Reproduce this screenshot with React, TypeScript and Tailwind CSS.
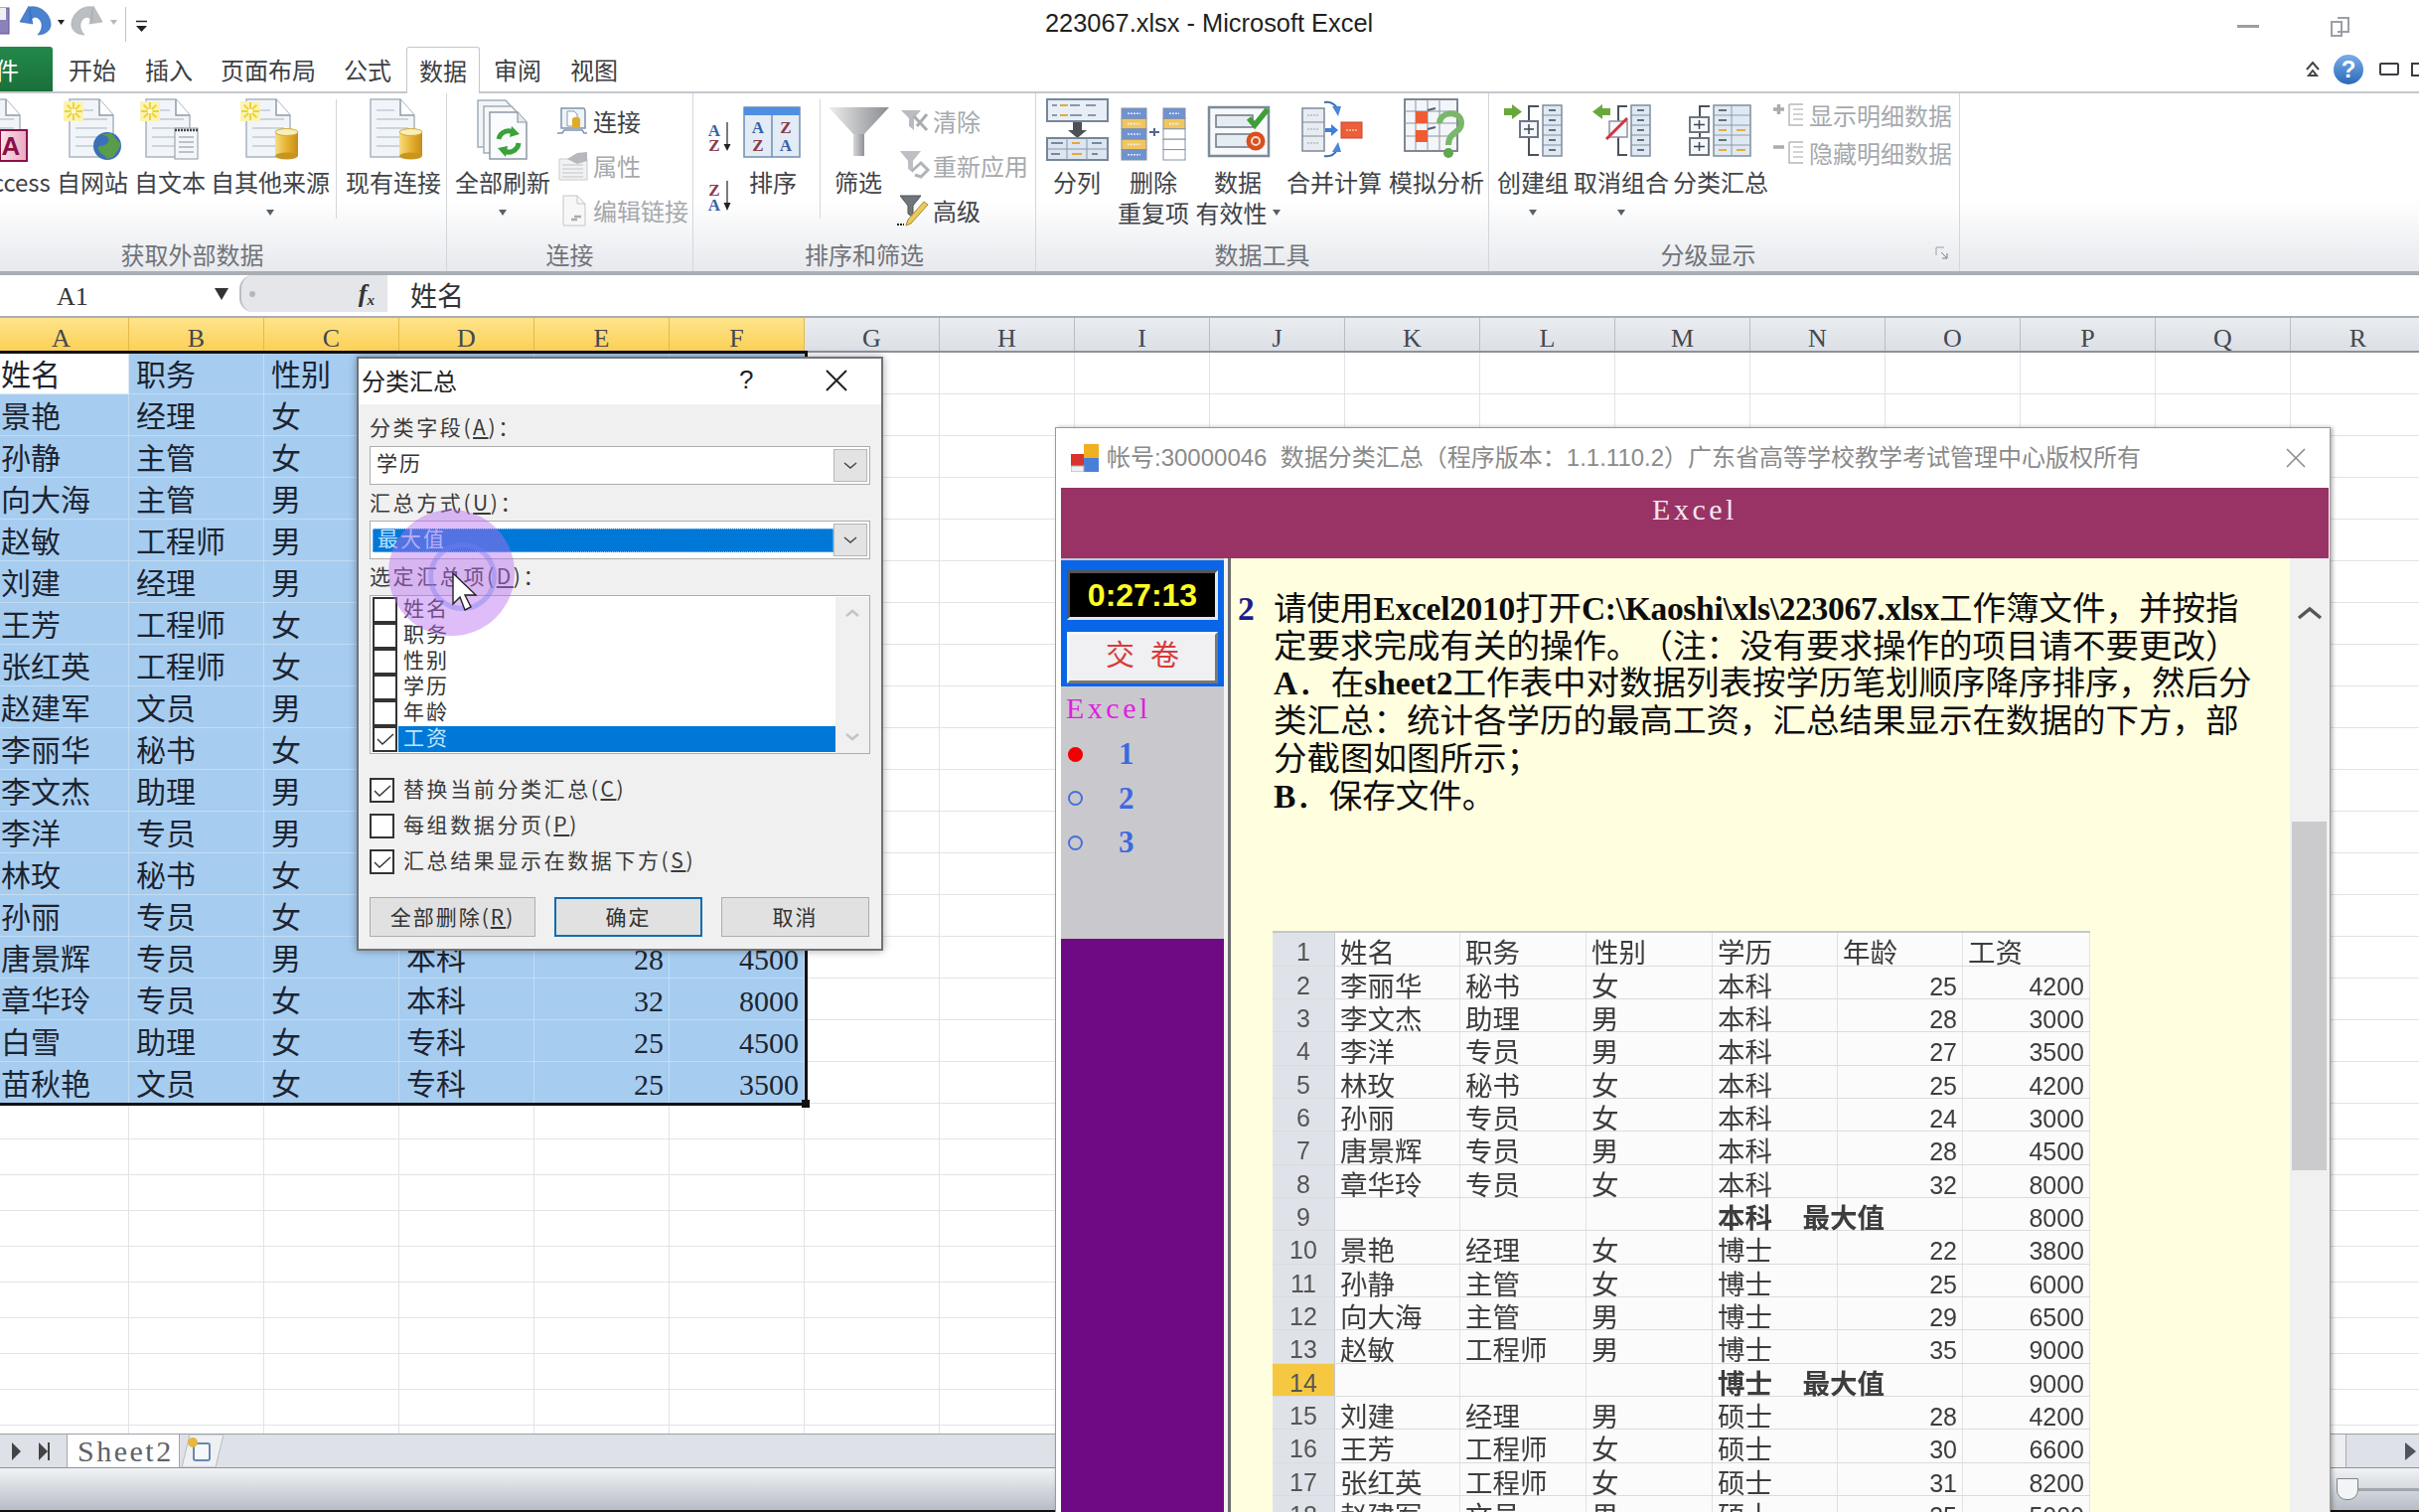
import type { ReactNode } from 'react';
import { clsx } from 'clsx';

const columns = ['A', 'B', 'C', 'D', 'E', 'F', 'G', 'H', 'I', 'J', 'K', 'L', 'M', 'N', 'O', 'P', 'Q', 'R'];

const sheetRows = [
  ['姓名', '职务', '性别', '学历', '年龄', '工资'],
  ['景艳', '经理', '女', '博士', '22', '3800'],
  ['孙静', '主管', '女', '博士', '25', '6000'],
  ['向大海', '主管', '男', '博士', '29', '6500'],
  ['赵敏', '工程师', '男', '博士', '35', '9000'],
  ['刘建', '经理', '男', '硕士', '28', '4200'],
  ['王芳', '工程师', '女', '硕士', '30', '6600'],
  ['张红英', '工程师', '女', '硕士', '31', '8200'],
  ['赵建军', '文员', '男', '硕士', '35', '5000'],
  ['李丽华', '秘书', '女', '本科', '25', '4200'],
  ['李文杰', '助理', '男', '本科', '28', '3000'],
  ['李洋', '专员', '男', '本科', '27', '3500'],
  ['林玫', '秘书', '女', '本科', '25', '4200'],
  ['孙丽', '专员', '女', '本科', '24', '3000'],
  ['唐景辉', '专员', '男', '本科', '28', '4500'],
  ['章华玲', '专员', '女', '本科', '32', '8000'],
  ['白雪', '助理', '女', '专科', '25', '4500'],
  ['苗秋艳', '文员', '女', '专科', '25', '3500'],
];

const shotRows = [
  ['姓名', '职务', '性别', '学历', '年龄', '工资'],
  ['李丽华', '秘书', '女', '本科', '25', '4200'],
  ['李文杰', '助理', '男', '本科', '28', '3000'],
  ['李洋', '专员', '男', '本科', '27', '3500'],
  ['林玫', '秘书', '女', '本科', '25', '4200'],
  ['孙丽', '专员', '女', '本科', '24', '3000'],
  ['唐景辉', '专员', '男', '本科', '28', '4500'],
  ['章华玲', '专员', '女', '本科', '32', '8000'],
  ['', '', '', '本科    最大值', '', '8000'],
  ['景艳', '经理', '女', '博士', '22', '3800'],
  ['孙静', '主管', '女', '博士', '25', '6000'],
  ['向大海', '主管', '男', '博士', '29', '6500'],
  ['赵敏', '工程师', '男', '博士', '35', '9000'],
  ['', '', '', '博士    最大值', '', '9000'],
  ['刘建', '经理', '男', '硕士', '28', '4200'],
  ['王芳', '工程师', '女', '硕士', '30', '6600'],
  ['张红英', '工程师', '女', '硕士', '31', '8200'],
  ['赵建军', '文员', '男', '硕士', '35', '5000'],
];

const shotWidths = ['w-[126px]', 'w-[127px]', 'w-[127px]', 'w-[126px]', 'w-[126px]', 'w-[128px]'];

function Burst({ x = 16, y = 18 }: { x?: number; y?: number }) {
  return (
    <g>
      <rect x={x - 10} y={y - 10} width="20" height="20" fill="#fbf3b4" />
      <g stroke="#ecd23a" strokeWidth="2">
        {[0, 45, 90, 135].map((a) => (
          <line key={a} x1={x - 9} y1={y} x2={x + 9} y2={y} transform={`rotate(${a} ${x} ${y})`} />
        ))}
      </g>
      <circle cx={x} cy={y} r="2.5" fill="#fffbe0" />
    </g>
  );
}

function Page({ x = 12 }: { x?: number }) {
  return (
    <g>
      <path d={`M${x} 6H${x + 30}L${x + 44} 22V64H${x}Z`} fill="#f1f5fa" stroke="#a9b4c0" strokeWidth="1.5" />
      <path d={`M${x + 30} 6V22H${x + 44}`} fill="#fff" stroke="#8f9ba8" strokeWidth="1.5" />
      {[17, 26, 35, 44, 53].map((y) => (
        <line key={y} x1={x + 6} x2={y < 24 ? x + 24 : x + 38} y1={y} y2={y} stroke="#c4ccd5" strokeWidth="1.6" />
      ))}
    </g>
  );
}

function Cylinder({ x = 40, w = 23, top = 39 }: { x?: number; w?: number; top?: number }) {
  return (
    <g>
      <rect x={x} y={top} width={w} height={63 - top} fill="url(#gold)" />
      <ellipse cx={x + w / 2} cy={63} rx={w / 2} ry="3.5" fill="#c8961e" />
      <ellipse cx={x + w / 2} cy={top} rx={w / 2} ry="3.5" fill="#f9eeb8" stroke="#d0aa3a" />
    </g>
  );
}

function MiniCell({ x, y, w, h = 10.4, kind }: { x: number; y: number; w: number; h?: number; kind: 'blue' | 'gold' | 'none' }) {
  const fill = kind === 'blue' ? '#6f92d2' : kind === 'gold' ? '#f2c65c' : '#ffffff';
  return (
    <g>
      <rect x={x} y={y} width={w} height={h} fill={fill} stroke="#8492a4" />
      {kind !== 'none' && (
        <line x1={x + 6} x2={x + w - 6} y1={y + h / 2} y2={y + h / 2} stroke="#e8eefc" strokeWidth="1.6" strokeDasharray="2 1" />
      )}
    </g>
  );
}

function Caret() {
  return <span className="inline-block h-0 w-0 border-x-[4px] border-t-[6px] border-x-transparent border-t-[#5b5f66]" />;
}

function Big({
  className,
  label,
  line2,
  arrow,
  children,
}: {
  className: string;
  label: string;
  line2?: ReactNode;
  arrow?: boolean;
  children: ReactNode;
}) {
  return (
    <div className={clsx('flex shrink-0 flex-col items-center', className)}>
      <svg width="70" height="73" viewBox="0 0 70 73" className="shrink-0 overflow-visible">
        {children}
      </svg>
      <div className="h-[31px] whitespace-nowrap text-[24px] leading-[31px]">{label}</div>
      {line2 && <div className="h-[31px] whitespace-nowrap text-[24px] leading-[31px]">{line2}</div>}
      {arrow && (
        <div className="flex h-[31px] items-center">
          <Caret />
        </div>
      )}
    </div>
  );
}

function Small({
  className,
  label,
  off,
  children,
}: {
  className: string;
  label: string;
  off?: boolean;
  children: ReactNode;
}) {
  return (
    <div className={clsx('flex items-center whitespace-nowrap text-[24px]', className, off && 'text-[#a6a9ad]')}>
      <svg width="32" height="30" viewBox="0 0 32 30" className="mr-[4px] shrink-0 overflow-visible">
        {children}
      </svg>
      {label}
    </div>
  );
}

function Group({
  className,
  labelClass,
  label,
  launcher,
  children,
}: {
  className: string;
  labelClass?: string;
  label: string;
  launcher?: boolean;
  children: ReactNode;
}) {
  return (
    <div className={clsx('relative flex shrink-0 flex-col border-r border-[#d3d6da]', className)}>
      <div className="flex h-[145px]">{children}</div>
      <div className={clsx('h-[33px] text-center text-[24px] leading-[33px] text-[#70747a]', labelClass)}>{label}</div>
      {launcher && (
        <svg width="14" height="14" viewBox="0 0 14 14" className="absolute bottom-[11px] right-[10px]">
          <path d="M1 1H9M1 1V9" stroke="#9aa0a6" fill="none" />
          <path d="M6 6L12 12M12 7V12H7" stroke="#7b8086" fill="none" />
        </svg>
      )}
    </div>
  );
}

function Sep() {
  return <div className="mx-[4px] mt-[6px] h-[120px] w-px shrink-0 bg-[#d4d7db]" />;
}

function OutlineColumn() {
  return (
    <g>
      <rect x="45" y="12" width="19" height="51" fill="#dfe9f4" stroke="#7f8d9c" strokeWidth="1.5" />
      <path d="M45 22H64M45 32H64M45 42H64M45 52H64" stroke="#7f8d9c" />
      <path d="M51 17H58M51 27H58M51 37H58M51 47H58M51 57H58" stroke="#3e4650" strokeWidth="1.5" />
    </g>
  );
}

function Ribbon() {
  return (
    <div className="flex h-[183px] shrink-0 border-b-[4px] border-[#a9adb4] bg-gradient-to-b from-white from-60% to-[#e7e9ed] text-[#404348]">
      <Group className="w-[450px]" labelClass="pr-[62px]" label="获取外部数据">
        <Big className="-ml-[26px] w-[80px]" label="Access">
          <Page x={-3} />
          <rect x="21" y="37" width="27" height="31" fill="url(#access)" stroke="#8c1048" strokeWidth="2" />
          <text x="32" y="62" textAnchor="middle" fontSize="26" fontWeight="700" fill="#8c1048" fontFamily="Liberation Sans">
            A
          </text>
        </Big>
        <Big className="w-[78px]" label="自网站">
          <Page x={12} />
          <Burst />
          <circle cx="50" cy="53" r="14" fill="#3b6fb8" />
          <path d="M42 42C49 41 54 45 50 50C46 54 44 51 41 54C40 60 46 60 50 66L56 64C60 58 64 54 63 50C60 48 58 44 54 40Z" fill="#5a9c4a" />
        </Big>
        <Big className="w-[78px]" label="自文本">
          <Page x={11} />
          <Burst x={15} />
          <rect x="40" y="35" width="23" height="31" fill="#f4f7fa" stroke="#8c96a1" />
          <path d="M40 37H63" stroke="#444" strokeWidth="2.5" strokeDasharray="2 1" />
          <path d="M44 44H59M44 49H59M44 54H59M44 59H59" stroke="#a8b1bc" strokeWidth="1.6" />
        </Big>
        <Big className="w-[124px]" label="自其他来源" arrow>
          <Page x={11} />
          <Burst x={15} />
          <Cylinder />
        </Big>
        <Sep />
        <Big className="w-[106px]" label="现有连接">
          <Page x={12} />
          <Cylinder x={41} />
        </Big>
      </Group>
      <Group className="w-[248px]" label="连接">
        <Big className="ml-[3px] w-[106px]" label="全部刷新" arrow>
          <path d="M10 7H38L47 17V54H10Z" fill="#f2f4f7" stroke="#a3adb8" strokeWidth="1.5" />
          <path d="M16 13H44L53 23V60H16Z" fill="#f5f7f9" stroke="#a3adb8" strokeWidth="1.5" />
          <path d="M22 19H50L59 29V66H22Z" fill="#fafbfc" stroke="#8d98a5" strokeWidth="1.5" />
          <path d="M50 19V29H59" fill="#e3e8ee" stroke="#8d98a5" strokeWidth="1.2" />
          <path d="M31 46A10 10 0 0 1 47 40" fill="none" stroke="#3aa23a" strokeWidth="5" />
          <path d="M44 33L52 41L42 44Z" fill="#3aa23a" />
          <path d="M51 50A10 10 0 0 1 35 57" fill="none" stroke="#3aa23a" strokeWidth="5" />
          <path d="M38 64L30 55L40 53Z" fill="#3aa23a" />
        </Big>
        <div className="ml-[2px] flex flex-col pt-[5px]">
          <Small className="h-[45px]" label="连接">
            <path d="M4 2H26C28 2 28 4 28 6V22H4Z" fill="#eef3f8" stroke="#7f94ab" strokeWidth="1.5" />
            <path d="M0 27H5L7 24H25L27 27H30" fill="none" stroke="#7f94ab" strokeWidth="1.5" />
            <path d="M10 5H17L20 8V20H10Z" fill="#fff" stroke="#8c98a6" />
            <rect x="15" y="11" width="8" height="11" rx="2.5" fill="#e0ac28" />
          </Small>
          <Small className="h-[45px]" label="属性" off>
            <path d="M2 8H30V29H2Z" fill="#f1f2f3" stroke="#c8cacc" />
            <path d="M5 14H26M5 18H26M5 22H26M5 26H26" stroke="#d2d4d7" strokeWidth="1.5" />
            <path d="M10 8L20 2L30 1V10L20 13Z" fill="#b6b8bb" />
          </Small>
          <Small className="h-[45px]" label="编辑链接" off>
            <path d="M6 0H20L28 8V30H6Z" fill="#f7f7f8" stroke="#c4c6c9" />
            <path d="M20 0V8H28" fill="none" stroke="#c4c6c9" />
            <path d="M14 24H20M17 21H24" stroke="#a9acb0" strokeWidth="2.5" />
          </Small>
        </div>
      </Group>
      <Group className="w-[345px]" label="排序和筛选">
        <svg width="42" height="130" viewBox="0 0 42 130" className="ml-[5px] shrink-0">
          <g fontFamily="Liberation Serif" fontWeight="700" fontSize="17" textAnchor="middle">
            <text x="16" y="43" fill="#3a5fa8">A</text>
            <text x="16" y="58" fill="#8a3a4a">Z</text>
            <text x="16" y="103" fill="#8a3a4a">Z</text>
            <text x="16" y="118" fill="#3a5fa8">A</text>
          </g>
          <path d="M29 29V52" stroke="#222" strokeWidth="1.2" />
          <path d="M25.5 51L29 58L32.5 51Z" fill="#222" />
          <path d="M29 88V110" stroke="#222" strokeWidth="1.2" />
          <path d="M25.5 110L29 118L32.5 110Z" fill="#222" />
        </svg>
        <Big className="w-[66px]" label="排序">
          <rect x="6" y="14" width="56" height="50" fill="#e3ebf5" stroke="#6e8fb5" strokeWidth="1.5" />
          <rect x="6" y="14" width="56" height="8" fill="#4f8ee0" />
          <line x1="34" y1="22" x2="34" y2="64" stroke="#6e8fb5" strokeWidth="1.5" />
          <g fontFamily="Liberation Serif" fontWeight="700" fontSize="17" textAnchor="middle">
            <text x="20" y="40" fill="#3a5fa8">A</text>
            <text x="20" y="58" fill="#8a3a4a">Z</text>
            <text x="48" y="40" fill="#8a3a4a">Z</text>
            <text x="48" y="58" fill="#3a5fa8">A</text>
          </g>
        </Big>
        <div className="mx-[14px] mt-[6px] h-[120px] w-px shrink-0 bg-[#d4d7db]" />
        <Big className="-ml-[14px] w-[76px]" label="筛选">
          <path d="M5 14H66L41 41H30Z" fill="url(#funnel)" />
          <rect x="30" y="41" width="11" height="22" fill="url(#neck)" />
        </Big>
        <div className="ml-px flex flex-col pt-[5px]">
          <Small className="h-[45px]" label="清除" off>
            <path d="M4 4H24L17 12V24L12 20V12Z" fill="#b9bcc0" />
            <path d="M17 10L30 24M30 8L20 20" stroke="#a9acb0" strokeWidth="3" />
          </Small>
          <Small className="h-[45px]" label="重新应用" off>
            <path d="M3 0H24L16 10V22L11 18V10Z" fill="#bcbfc3" />
            <path d="M15 20L24 12L31 19L24 26L18 24" fill="none" stroke="#b0b3b7" strokeWidth="3" />
          </Small>
          <Small className="h-[45px]" label="高级">
            <path d="M3 0H24L16 10V22L11 18V10Z" fill="#70757b" stroke="#4f5359" />
            <path d="M31 9L14 28L9 30L11 24L27 6Z" fill="#e9c960" stroke="#a98a2c" />
            <path d="M0 29H7" stroke="#222" strokeDasharray="2 1" strokeWidth="2" />
          </Small>
        </div>
      </Group>
      <Group className="w-[456px]" label="数据工具">
        <Big className="ml-[5px] w-[72px]" label="分列">
          <rect x="5" y="6" width="61" height="22" fill="#e8eef5" stroke="#76869a" strokeWidth="2" />
          <path d="M10 12H15M28 12H38M44 12H54M10 22H15M28 22H40M46 22H54" stroke="#6a7c92" strokeWidth="1.6" />
          <path d="M18 12H26M18 22H26" stroke="#e0ab3a" strokeWidth="1.8" />
          <path d="M31 29H40V37H45L35.5 45L26 37H31Z" fill="#4d5157" />
          <rect x="5" y="45" width="61" height="22" fill="#dce5f0" stroke="#76869a" strokeWidth="2" />
          <path d="M25 45V67M45 45V67M5 56H66" stroke="#8796a8" />
          <path d="M9 50H21M9 61H18M50 50H60M50 61H56" stroke="#566a82" strokeWidth="1.6" />
          <path d="M30 50H38M30 61H40" stroke="#e0ab3a" strokeWidth="1.8" />
        </Big>
        <Big className="w-[82px]" label="删除" line2="重复项">
          <MiniCell x={3} y={15} w={25} kind="blue" />
          <MiniCell x={3} y={25.4} w={25} kind="gold" />
          <MiniCell x={3} y={35.8} w={25} kind="blue" />
          <MiniCell x={3} y={46.2} w={25} kind="gold" />
          <MiniCell x={3} y={56.6} w={25} kind="blue" />
          <path d="M31 39H41M36 35V43" stroke="#51688c" strokeWidth="2" />
          <MiniCell x={45} y={15} w={22} kind="blue" />
          <MiniCell x={45} y={25.4} w={22} kind="gold" />
          <MiniCell x={45} y={35.8} w={22} kind="none" />
          <MiniCell x={45} y={46.2} w={22} kind="none" />
          <MiniCell x={45} y={56.6} w={22} kind="none" />
        </Big>
        <Big
          className="w-[88px]"
          label="数据"
          line2={
            <span className="flex items-center gap-[5px]">
              有效性
              <Caret />
            </span>
          }
        >
          <rect x="6" y="14" width="60" height="49" fill="#f7f9fb" stroke="#7d8a99" strokeWidth="2.5" />
          <rect x="13" y="22" width="37" height="12" fill="#e6ecf3" stroke="#6e7883" strokeWidth="1.5" />
          <rect x="13" y="41" width="37" height="13" fill="#e6ecf3" stroke="#6e7883" strokeWidth="1.5" />
          <path d="M46 25L52 32L65 16" fill="none" stroke="#3f9f35" strokeWidth="5.5" />
          <circle cx="53" cy="48" r="9.5" fill="#d8501f" />
          <circle cx="53" cy="48" r="4" fill="none" stroke="#f6dcc8" strokeWidth="2" />
        </Big>
        <Big className="w-[106px]" label="合并计算">
          <rect x="3" y="15" width="22" height="43" fill="#e8ecf2" stroke="#7d8a99" strokeWidth="1.5" />
          <path d="M3 29H25M3 43H25" stroke="#7d8a99" />
          <path d="M8 22H20M8 36H20M8 50H20" stroke="#b3bac4" strokeWidth="1.5" strokeDasharray="2 1" />
          <path d="M26 35H32V31L39 37L32 43V39H26Z" fill="#3f7fd8" />
          <path d="M25 9C31 8 35 10 38 15" fill="none" stroke="#3d6db0" strokeWidth="2" />
          <path d="M33 13L42 13L39 23Z" fill="#4a86d8" />
          <path d="M25 63C31 64 35 62 38 57" fill="none" stroke="#3d6db0" strokeWidth="2" />
          <path d="M33 59L42 59L39 49Z" fill="#4a86d8" />
          <rect x="42" y="29" width="21" height="16" fill="#ef5e3a" stroke="#c04a2c" />
          <path d="M47 37H58" stroke="#f7c9b8" strokeWidth="1.6" strokeDasharray="2 1" />
        </Big>
        <Big className="w-[100px]" label="模拟分析">
          <rect x="3" y="6" width="53" height="52" fill="#f3f5f8" stroke="#737c87" strokeWidth="1.8" />
          <path d="M14 6V58M26 6V58M38 6V58M3 18H56M3 30H56M3 43H56" stroke="#8c95a0" />
          <rect x="14" y="18" width="12" height="12" fill="#ef5b32" />
          <rect x="14" y="37" width="12" height="12" fill="#ef5b32" />
          <path d="M26 17L34 15M26 36L34 34" stroke="#566070" strokeWidth="2" />
          <path d="M38 30C38 18 60 16 60 30C60 40 47 38 47 52" fill="none" stroke="#79b769" strokeWidth="6" />
          <circle cx="47" cy="60" r="5" fill="#5fa74d" />
        </Big>
      </Group>
      <Group className="w-[474px]" labelClass="pr-[32px]" label="分级显示" launcher>
        <Big className="ml-[5px] w-[78px]" label="创建组" arrow>
          <path d="M6 15H14V11L24 18.5L14 26V22H6Z" fill="#6aa83c" />
          <path d="M41 13H31V62H41" fill="none" stroke="#4a525c" strokeWidth="2" />
          <rect x="22" y="28" width="18" height="16" fill="#f5f7fa" stroke="#6d7783" strokeWidth="2" />
          <path d="M26 36H36M31 31V41" stroke="#3e4650" strokeWidth="1.5" />
          <OutlineColumn />
        </Big>
        <Big className="w-[100px]" label="取消组合" arrow>
          <path d="M24 15H16V11L6 18.5L16 26V22H24Z" fill="#6aa83c" />
          <path d="M41 13H32V62H41" fill="none" stroke="#4a525c" strokeWidth="2" />
          <rect x="23" y="28" width="18" height="16" fill="#f5f7fa" stroke="#8b93a0" strokeWidth="1.5" />
          <path d="M20 46L41 25" stroke="#cf3640" strokeWidth="3" />
          <OutlineColumn />
        </Big>
        <Big className="w-[100px]" label="分类汇总">
          <path d="M24 13H14V45" fill="none" stroke="#4a525c" strokeWidth="2" />
          <rect x="4" y="24" width="19" height="15" fill="#f5f7fa" stroke="#6d7783" strokeWidth="2" />
          <rect x="4" y="45" width="19" height="17" fill="#f5f7fa" stroke="#6d7783" strokeWidth="2" />
          <path d="M8 31.5H19M13.5 27V36M8 53.5H19M13.5 49V58" stroke="#3e4650" strokeWidth="1.5" />
          <rect x="28" y="12" width="37" height="51" fill="#dfe9f4" stroke="#7f8d9c" strokeWidth="1.5" />
          <path d="M46 12V63M28 22H65M28 32H65M28 42H65M28 52H65" stroke="#8d9aa8" />
          <path d="M33 17H41M33 27H41M33 47H41" stroke="#3e4650" strokeWidth="1.5" />
          <path d="M33 37H41M51 37H60M33 57H41M51 57H60" stroke="#e6ac3c" strokeWidth="2" />
        </Big>
        <div className="ml-[3px] flex flex-col pt-[3px]">
          <Small className="h-[38px] text-[#a6a9ad]" label="显示明细数据" off>
            <path d="M0 9H11M5.5 4V14" stroke="#a9acb0" strokeWidth="3.5" />
            <path d="M16 4H30M16 4V25H30" fill="none" stroke="#b5b8bc" strokeWidth="1.5" />
            <path d="M20 9H30M20 14H30M20 19H30" stroke="#c2c5c9" strokeWidth="1.5" />
          </Small>
          <Small className="h-[38px] text-[#a6a9ad]" label="隐藏明细数据" off>
            <path d="M0 9H11" stroke="#a9acb0" strokeWidth="3.5" />
            <path d="M16 4H30M16 4V25H30" fill="none" stroke="#b5b8bc" strokeWidth="1.5" />
            <path d="M20 9H30M20 14H30M20 19H30" stroke="#c2c5c9" strokeWidth="1.5" />
          </Small>
        </div>
      </Group>
    </div>
  );
}

function TitleBar() {
  return (
    <div className="flex h-[47px] shrink-0 items-center bg-white">
      <div className="flex w-[1052px] shrink-0 items-center">
        <svg width="150" height="44" viewBox="0 0 150 44" className="overflow-visible">
          <rect x="-8" y="6" width="17" height="26" fill="#8a82b8" stroke="#5f5794" />
          <rect x="-8" y="6" width="14" height="12" fill="#eef0f6" />
          <path
            d="M20 20L29 4L33 22ZM30 5C42 3 52 14 51 24C50 30 44 33 38 33C43 28 44 20 38 16C35 14 32 16 30 20Z"
            fill="#4a82d2"
            stroke="#2f62ad"
            strokeWidth="0.6"
          />
          <path d="M58 18H65L61.5 23Z" fill="#222" />
          <path
            d="M103 20L94 4L90 22ZM93 5C81 3 71 14 72 24C73 30 79 33 85 33C80 28 79 20 85 16C88 14 91 16 93 20Z"
            fill="#bcbfc2"
            stroke="#a3a6a9"
            strokeWidth="0.6"
          />
          <path d="M111 18H118L114.5 23Z" fill="#b5b8bc" />
          <line x1="126.5" y1="5" x2="126.5" y2="40" stroke="#c0c3c8" />
          <path d="M137 19.5H148" stroke="#222" strokeWidth="1.5" />
          <path d="M137 24H148L142.5 30Z" fill="#222" />
        </svg>
      </div>
      <div className="whitespace-nowrap font-['Liberation_Sans',sans-serif] text-[25.4px] text-[#1f1f1f]">
        223067.xlsx - Microsoft Excel
      </div>
      <div className="flex flex-1 items-center justify-end pr-[69px]">
        <div className="mr-[72px] mt-[6px] h-[3px] w-[22px] bg-[#9b9fa5]" />
        <div className="relative mt-[6px] h-[20px] w-[20px]">
          <div className="absolute bottom-0 left-0 h-[16px] w-[12px] border-2 border-[#9b9fa5] bg-white" />
          <div className="absolute right-[1px] top-0 h-[16px] w-[12px] border-2 border-l-0 border-[#9b9fa5]" />
        </div>
      </div>
    </div>
  );
}

function TabRow() {
  const tabs = [
    { name: '开始', cls: 'ml-[16px]' },
    { name: '插入', cls: 'ml-[29px]' },
    { name: '页面布局', cls: 'ml-[28px]' },
    { name: '公式', cls: 'ml-[28px]' },
  ];
  return (
    <div className="flex h-[47px] shrink-0 items-center border-b-2 border-[#c4c7cc] bg-white text-[24px] text-[#3c3f44]">
      <div className="flex h-full w-[53px] items-center justify-end rounded-tr-[3px] bg-gradient-to-b from-[#23884a] to-[#19713a] pr-[34px] text-white">
        <span className="shrink-0">件</span>
      </div>
      {tabs.map((t) => (
        <span key={t.name} className={t.cls}>
          {t.name}
        </span>
      ))}
      <div className="relative -mb-[2px] ml-[15px] flex h-[47px] w-[74px] items-center justify-center rounded-t-[3px] border-x border-t border-[#c4c7cc] bg-white">
        数据
      </div>
      <span className="ml-[14px]">审阅</span>
      <span className="ml-[29px]">视图</span>
      <div className="-mr-[8px] ml-auto flex items-center">
        <svg width="16" height="18" viewBox="0 0 16 18" className="mr-[13px]">
          <path d="M2 9L8 2L14 9M4 15H12L8 10Z" fill="none" stroke="#444" strokeWidth="2" />
        </svg>
        <div className="flex h-[30px] w-[30px] items-center justify-center rounded-full bg-gradient-to-b from-[#79aee6] to-[#2b69bb] font-['Liberation_Sans',sans-serif] text-[24px] font-bold leading-none text-white">
          ?
        </div>
        <div className="ml-[16px] h-[13px] w-[20px] rounded-[2px] border-2 border-[#3a3d42]" />
        <div className="ml-[12px] h-[14px] w-[16px] border-2 border-[#3a3d42]" />
      </div>
    </div>
  );
}

function FormulaBar() {
  return (
    <div className="flex h-[37px] shrink-0 items-center bg-white text-[#333]">
      <div className="flex h-full w-[241px] items-center pl-[57px] font-['Liberation_Serif',serif] text-[26px]">
        <span className="pt-[5px]">A1</span>
        <span className="ml-[127px] h-0 w-0 border-x-[7px] border-t-[12px] border-x-transparent border-t-[#333]" />
      </div>
      <div className="flex h-full w-[149px] items-center justify-end rounded-l-[14px] border-l-2 border-[#b9bdc3] bg-[#e4e6ea] pr-[13px]">
        <span className="ml-[8px] mr-auto h-[6px] w-[6px] rounded-full bg-[#b4b8be]" />
        <span className="font-['Liberation_Serif',serif] text-[26px] font-bold italic leading-none">
          f<sub className="text-[15px]">x</sub>
        </span>
      </div>
      <div className="pl-[23px] pt-[3px] text-[27px]">姓名</div>
    </div>
  );
}

function Sheet() {
  const empties = Array.from({ length: 10 }, (_, i) => i);
  return (
    <div className="relative min-h-0 flex-1 overflow-hidden bg-white font-['Liberation_Serif','Noto_Sans_CJK_SC',serif] text-[#1d2430]">
      <div className="mt-[4px] flex h-[37px] border-y-2 border-t-[#a9adb4] border-b-[#8d9198]">
        {columns.map((c, i) => (
          <div
            key={c}
            className={clsx(
              'flex w-[136px] shrink-0 items-center justify-center border-r pt-[8px] text-[26px] text-[#44484e]',
              i === 0 && '-ml-[6px]',
              i < 6
                ? 'border-[#e3b94d] bg-gradient-to-b from-[#ffe48a] to-[#fbd055]'
                : 'border-[#b9bec5] bg-gradient-to-b from-[#e9ecf0] to-[#dce0e6]',
            )}
          >
            {c}
          </div>
        ))}
      </div>
      {sheetRows.map((row, r) => (
        <div key={r} className="flex h-[42px]">
          {columns.map((c, i) => {
            const v = row[i];
            const numeric = r > 0 && (i === 4 || i === 5);
            return (
              <div
                key={c}
                className={clsx(
                  'flex w-[136px] shrink-0 items-center whitespace-nowrap border-r border-b pt-[4px] text-[30px]',
                  i === 0 && '-ml-[6px]',
                  i >= 6 && 'border-[#e1e3e6]',
                  i < 6 && (r === 0 && i === 0 ? 'border-[#dfe8f2] bg-white' : 'border-[#c3dcf3] bg-[#a6cdf0]'),
                  numeric ? 'justify-end pr-[5px]' : 'pl-[7px]',
                )}
              >
                {v}
              </div>
            );
          })}
        </div>
      ))}
      {empties.map((r) => (
        <div key={r} className="flex h-[36px]">
          {columns.map((c, i) => (
            <div key={c} className={clsx('w-[136px] shrink-0 border-r border-b border-[#e1e3e6]', i === 0 && '-ml-[6px]')} />
          ))}
        </div>
      ))}
      <div className="absolute left-[-6px] top-[39px] h-[760px] w-[819px] border-[3px] border-[#111]">
        <div className="absolute -bottom-[5px] -right-[5px] h-[8px] w-[8px] bg-[#111]" />
      </div>
    </div>
  );
}

function BottomBars() {
  return (
    <>
      <div className="flex h-[35px] shrink-0 items-stretch border-y border-t-[#9ba0a7] border-b-[#8e9299] bg-[#dee2e8]">
        <div className="flex w-[68px] items-center gap-[18px] border-r border-[#a3a7ad] pl-[12px]">
          <span className="h-0 w-0 border-y-[9px] border-l-[9px] border-y-transparent border-l-[#444]" />
          <span className="flex items-center">
            <span className="h-0 w-0 border-y-[9px] border-l-[9px] border-y-transparent border-l-[#444]" />
            <span className="h-[18px] w-[2px] bg-[#444]" />
          </span>
        </div>
        <div className="flex w-[113px] items-center border-r border-[#a3a7ad] bg-white pl-[10px] font-['Liberation_Serif',serif] text-[30px] tracking-[2.5px] text-[#5d6268]">
          Sheet2
        </div>
        <svg width="44" height="33" viewBox="0 0 44 33" className="shrink-0">
          <path d="M10 0H44L36 33H2Z" fill="#eef0f3" stroke="#b7bbc1" />
          <rect x="14" y="9" width="16" height="17" rx="2" fill="#f6f8fb" stroke="#6a86ad" strokeWidth="2" />
          <circle cx="13" cy="8" r="5" fill="#e9b73c" />
        </svg>
        <div className="ml-auto flex items-center">
          <div className="h-full w-[18px] border-r border-[#a7abb1] bg-[#eceef1]" />
          <div className="flex h-full w-[73px] items-center justify-end pr-[3px]">
            <span className="h-0 w-0 border-y-[9px] border-l-[11px] border-y-transparent border-l-[#50545a]" />
          </div>
        </div>
      </div>
      <div className="flex h-[44px] shrink-0 items-center justify-end border-b-2 border-[#111] bg-gradient-to-b from-[#f1f3f5] to-[#b8bdc6]">
        <div className="relative h-[3px] w-[72px] bg-[#a2a7ae]">
          <div className="absolute -left-[11px] -top-[10px] h-[22px] w-[22px] rounded-b-[10px] border border-[#7f848b] bg-[#f3f4f6]" />
        </div>
      </div>
    </>
  );
}

function U({ c }: { c: string }) {
  return (
    <span>
      (<span className="underline">{c}</span>)
    </span>
  );
}

function Check({ on, className }: { on?: boolean; className: string }) {
  return (
    <div className={clsx('flex shrink-0 items-center justify-center border-2 border-[#333] bg-white', className)}>
      {on && (
        <svg width="18" height="14" viewBox="0 0 18 14">
          <path d="M1 7L6 12L17 2" fill="none" stroke="#333" strokeWidth="1.4" />
        </svg>
      )}
    </div>
  );
}

function DropArrow() {
  return (
    <div className="flex h-[33px] w-[34px] shrink-0 items-center justify-center border border-[#b5b5b5] bg-[#e3e3e3]">
      <svg width="14" height="8" viewBox="0 0 14 8">
        <path d="M1 1L7 6L13 1" fill="none" stroke="#444" strokeWidth="1.4" />
      </svg>
    </div>
  );
}

function SubtotalDialog() {
  const items = ['姓名', '职务', '性别', '学历', '年龄', '工资'];
  const label = 'flex items-center text-[21px] tracking-[2.6px] text-[#3a3a3a]';
  return (
    <div className="absolute left-[359px] top-[359px] flex h-[598px] w-[530px] flex-col border-2 border-[#6f7378] bg-[#f0f0f0] shadow-[0_0_8px_rgba(0,0,0,0.35)]">
      <div className="flex h-[46px] shrink-0 items-center bg-white pb-[3px] pl-[3px] text-[24px] text-[#222]">
        分类汇总
        <span className="ml-[284px] font-['Liberation_Sans',sans-serif] text-[26px]">?</span>
        <svg width="22" height="22" viewBox="0 0 22 22" className="ml-[73px]">
          <path d="M1 1L21 21M21 1L1 21" stroke="#222" strokeWidth="2" />
        </svg>
      </div>
      <div className="flex flex-1 flex-col px-[11px]">
        <div className={clsx(label, 'h-[42px] pt-[3px]')}>
          分类字段<U c="A" />：
        </div>
        <div className="flex h-[39px] shrink-0 items-center border border-[#adadad] bg-white pr-[2px] text-[21px] tracking-[2px] text-[#333]">
          <span className="flex-1 pb-[5px] pl-[6px]">学历</span>
          <DropArrow />
        </div>
        <div className={clsx(label, 'h-[36px] pb-[1px]')}>
          汇总方式<U c="U" />：
        </div>
        <div className="flex h-[39px] shrink-0 items-center border border-[#adadad] bg-white px-[2px] text-[21px] tracking-[2px]">
          <span className="flex h-[24px] flex-1 items-center border border-dotted border-[#9cc4e8] bg-[#0078d7] pb-[4px] pl-[4px] text-[#b9e2ff]">
            最大值
          </span>
          <DropArrow />
        </div>
        <div className={clsx(label, 'h-[36px] pb-[2px]')}>
          选定汇总项<U c="D" />：
        </div>
        <div className="flex h-[160px] shrink-0 border border-[#adadad] bg-white pl-[2px] pt-[1px] text-[21px] tracking-[2px] text-[#333]">
          <div className="flex flex-1 flex-col">
            {items.map((it, i) => (
              <div key={it} className="flex h-[26px] items-center">
                <Check on={i === 5} className="h-[26px] w-[25px]" />
                <div
                  className={clsx(
                    'ml-px flex h-[26px] flex-1 items-center pb-[4px] pl-[5px]',
                    i === 5 && 'bg-[#0078d7] text-[#bfe6ff]',
                  )}
                >
                  {it}
                </div>
              </div>
            ))}
          </div>
          <div className="flex w-[34px] flex-col items-center justify-between bg-[#f0f0f0] py-[12px]">
            <svg width="14" height="9" viewBox="0 0 14 9">
              <path d="M1 7L7 2L13 7" fill="none" stroke="#c4c4c4" strokeWidth="2.5" />
            </svg>
            <svg width="14" height="9" viewBox="0 0 14 9">
              <path d="M1 2L7 7L13 2" fill="none" stroke="#c4c4c4" strokeWidth="2.5" />
            </svg>
          </div>
        </div>
        <div className="mt-[24px] flex flex-col gap-[11px] text-[21px] tracking-[2.6px] text-[#3a3a3a]">
          <div className="flex h-[25px] items-center">
            <Check on className="mr-[9px] h-[25px] w-[25px]" />
            <span className="-mt-[4px]">
              替换当前分类汇总<U c="C" />
            </span>
          </div>
          <div className="flex h-[25px] items-center">
            <Check className="mr-[9px] h-[25px] w-[25px]" />
            <span className="-mt-[4px]">
              每组数据分页<U c="P" />
            </span>
          </div>
          <div className="flex h-[25px] items-center">
            <Check on className="mr-[9px] h-[25px] w-[25px]" />
            <span className="-mt-[4px]">
              汇总结果显示在数据下方<U c="S" />
            </span>
          </div>
        </div>
        <div className="mt-[23px] flex gap-[19px] text-[21px] tracking-[2px] text-[#333]">
          <div className="flex h-[40px] w-[167px] items-center justify-center border border-[#adadad] bg-[#e1e1e1]">
            全部删除<U c="R" />
          </div>
          <div className="flex h-[40px] w-[149px] items-center justify-center border-2 border-[#0f6cb0] bg-[#e1e1e1]">
            确定
          </div>
          <div className="flex h-[40px] w-[149px] items-center justify-center border border-[#adadad] bg-[#e1e1e1]">
            取消
          </div>
        </div>
      </div>
    </div>
  );
}

function CursorHalo() {
  return (
    <>
      <div className="pointer-events-none absolute left-[391px] top-[513px] h-[127px] w-[127px] rounded-full bg-[#b86cf0]/45" />
      <div className="pointer-events-none absolute left-[431px] top-[546px] h-[69px] w-[69px] rounded-full border-[5px] border-[#7a7cf0]/40" />
      <svg width="26" height="41" viewBox="0 0 26 41" className="absolute left-[455px] top-[576px]">
        <path d="M1 1V32L8 25L13 38L19 35L13 23H24Z" fill="#fff" stroke="#222" strokeWidth="1.4" />
      </svg>
    </>
  );
}

function ExamWindow() {
  return (
    <div className="absolute left-[1062px] top-[430px] flex h-[1092px] w-[1284px] flex-col border-x border-t border-[#9a9a9a] bg-white shadow-[2px_0_4px_rgba(0,0,0,0.3)]">
      <div className="flex h-[60px] shrink-0 items-center pl-[15px] pr-[23px]">
        <svg width="28" height="28" viewBox="0 0 28 28" className="mr-[8px] shrink-0">
          <rect x="0" y="10" width="13" height="12" fill="#d8342c" />
          <rect x="13" y="0" width="15" height="14" fill="#f0b020" />
          <rect x="13" y="14" width="15" height="14" fill="#4a7fd8" />
          <rect x="0" y="22" width="13" height="6" fill="#eef0f4" stroke="#aaa" />
        </svg>
        <span className="whitespace-nowrap font-['Liberation_Sans','Noto_Sans_CJK_SC',sans-serif] text-[24px] text-[#8a8a8a] [text-spacing-trim:space-all]">
          帐号:30000046&nbsp; 数据分类汇总（程序版本：1.1.110.2）广东省高等学校教学考试管理中心版权所有
        </span>
        <svg width="22" height="22" viewBox="0 0 22 22" className="ml-auto">
          <path d="M2 2L20 20M20 2L2 20" stroke="#8c8c8c" strokeWidth="1.6" />
        </svg>
      </div>
      <div className="ml-[5px] mr-px h-[71px] shrink-0 bg-[#993366] text-center font-['Liberation_Serif',serif] text-[30px] leading-[44px] tracking-[3.5px] text-[#f4e8f0]">
        Excel
      </div>
      <div className="ml-[5px] flex min-h-0 flex-1">
        <div className="flex w-[164px] shrink-0 flex-col bg-[#c9c9cd]">
          <div className="mt-[2px] flex h-[127px] shrink-0 flex-col bg-[#0a66e8] px-[6px] pt-[10px]">
            <div className="flex h-[50px] items-center justify-center border-[3px] border-t-[#555] border-l-[#555] border-r-[#dfe8f2] border-b-[#dfe8f2] bg-black font-['Liberation_Sans',sans-serif] text-[32px] font-bold text-[#ffff22]">
              0:27:13
            </div>
            <div className="mt-[12px] flex h-[52px] items-center justify-center gap-[16px] border-[3px] border-t-[#f6f6f6] border-l-[#f6f6f6] border-r-[#777] border-b-[#777] bg-[#f0f0f2] pb-[9px] text-[29px] text-[#d83a3a]">
              <span>交</span>
              <span>卷</span>
            </div>
          </div>
          <div className="flex h-[254px] shrink-0 flex-col pl-[5px] font-['Liberation_Serif',serif]">
            <div className="mb-[6px] mt-[4px] text-[30px] leading-[36px] tracking-[3.5px] text-[#e01fe0]">Excel</div>
            {[
              { n: '1', on: true },
              { n: '2', on: false },
              { n: '3', on: false },
            ].map((it) => (
              <div key={it.n} className="flex h-[44.5px] items-center">
                <span
                  className={clsx(
                    'ml-[2px] h-[15px] w-[15px] rounded-full',
                    it.on ? 'bg-[#f00000]' : 'border-2 border-[#4a6fdc]',
                  )}
                />
                <span className="ml-[36px] text-[31px] font-bold text-[#3f68e0]">{it.n}</span>
              </div>
            ))}
          </div>
          <div className="flex-1 bg-[#6f0a85]" />
        </div>
        <div className="w-[4px] shrink-0 bg-[#f3f3f3]" />
        <div className="w-[3px] shrink-0 bg-[#6e6e6e]" />
        <div className="flex min-w-0 flex-1 overflow-hidden bg-[#ffffe0] pl-[7px] pt-[32px] font-['Liberation_Serif','Noto_Sans_CJK_SC',serif] text-[33.5px] leading-[37.7px] text-[#0d0d0d] [text-spacing-trim:space-all]">
          <div className="w-[36px] shrink-0 font-bold text-[#1e1e88]">2</div>
          <div className="min-w-0 flex-1 whitespace-nowrap">
            <div>
              请使用<b className="tracking-[-0.3px]">Excel2010</b>打开<b className="tracking-[-0.3px]">C:\Kaoshi\xls\223067.xlsx</b>工作簿文件，并按指
            </div>
            <div>定要求完成有关的操作。（注：没有要求操作的项目请不要更改）</div>
            <div>
              <b>A</b>．在<b>sheet2</b>工作表中对数据列表按学历笔划顺序降序排序，然后分
            </div>
            <div>类汇总：统计各学历的最高工资，汇总结果显示在数据的下方，部</div>
            <div>分截图如图所示；</div>
            <div>
              <b>B</b>．保存文件。
            </div>
            <div className="-ml-px mt-[117px] w-[823px] border-t-2 border-[#c4c6c9] bg-[#fbfbfb] font-['Liberation_Sans','Noto_Sans_CJK_SC',sans-serif] text-[27.5px] leading-[33px] text-[#3d3d3d] blur-[0.6px]">
              {shotRows.map((row, r) => (
                <div key={r} className="flex h-[33.35px] border-b border-[#d9dcdf]">
                  <div
                    className={clsx(
                      'w-[63px] shrink-0 border-r border-[#c6cad0] pt-[3px] text-center text-[25px] text-[#555]',
                      r === 13 ? 'bg-[#f6c842]' : 'bg-[#dfe3e9]',
                    )}
                  >
                    {r + 1}
                  </div>
                  {row.map((v, i) => (
                    <div
                      key={i}
                      className={clsx(
                        'shrink-0 whitespace-pre border-r border-[#e0e2e5] px-[5px] pt-[4px]',
                        shotWidths[i],
                        r > 0 && i >= 4 && 'text-right text-[25px]',
                        v.includes('最大值') && 'font-bold',
                      )}
                    >
                      {v}
                    </div>
                  ))}
                </div>
              ))}
            </div>
          </div>
        </div>
        <div className="relative w-[40px] shrink-0 bg-[#f0f0f0]">
          <svg width="26" height="14" viewBox="0 0 26 14" className="absolute left-[7px] top-[48px]">
            <path d="M2 12L13 3L24 12" fill="none" stroke="#555" strokeWidth="3.5" />
          </svg>
          <div className="absolute left-[2px] top-[265px] h-[351px] w-[35px] bg-[#cbcbcd]" />
        </div>
      </div>
    </div>
  );
}

export default function App() {
  return (
    <div className="relative flex h-[1522px] w-[2435px] flex-col overflow-hidden bg-white font-['Noto_Sans_CJK_SC',sans-serif]">
      <svg className="absolute h-0 w-0">
        <defs>
          <linearGradient id="gold" x1="0" x2="1" y1="0" y2="0">
            <stop offset="0" stopColor="#f7dc80" />
            <stop offset="0.55" stopColor="#e5ae2c" />
            <stop offset="1" stopColor="#c58d18" />
          </linearGradient>
          <linearGradient id="funnel" x1="0" x2="1" y1="0" y2="0">
            <stop offset="0" stopColor="#eeeff0" />
            <stop offset="0.55" stopColor="#b4b6b9" />
            <stop offset="1" stopColor="#8a8d91" />
          </linearGradient>
          <linearGradient id="neck" x1="0" x2="1" y1="0" y2="0">
            <stop offset="0" stopColor="#d6d7d9" />
            <stop offset="1" stopColor="#8f9195" />
          </linearGradient>
          <linearGradient id="access" x1="0" x2="1" y1="0" y2="0">
            <stop offset="0" stopColor="#fbe4ea" />
            <stop offset="1" stopColor="#eaa8c0" />
          </linearGradient>
        </defs>
      </svg>
      <TitleBar />
      <TabRow />
      <Ribbon />
      <FormulaBar />
      <Sheet />
      <BottomBars />
      <SubtotalDialog />
      <CursorHalo />
      <ExamWindow />
    </div>
  );
}
